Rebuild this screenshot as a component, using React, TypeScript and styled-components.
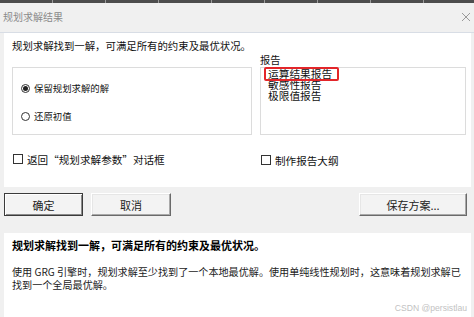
import React from 'react';
import styled, { createGlobalStyle } from 'styled-components';

const GlobalStyle = createGlobalStyle`
  html, body {
    margin: 0;
    padding: 0;
    background: #f0f0f0;
  }
  * {
    box-sizing: border-box;
  }
`;

const CJK = `"Noto Sans CJK SC", "Noto Sans", sans-serif`;

const Window = styled.div`
  width: 474px;
  height: 317px;
  overflow: hidden;
  background: #f0f0f0;
  font-family: ${CJK};
  color: #111;
  display: flex;
  flex-direction: column;
`;

// the taskbar tiles peeking out above the dialog
const TopStrip = styled.div`
  height: 3px;
  flex: none;
  background: repeating-linear-gradient(
    90deg,
    #4d4d4d 0px,
    #4d4d4d 52px,
    #9a9a9a 52px,
    #9a9a9a 53px
  );
`;

const TitleBar = styled.div`
  height: 30px;
  flex: none;
  display: flex;
  align-items: center;
  justify-content: space-between;
  padding: 0 3px 2px 3px;
  border-bottom: 1px solid #d8dde5;
`;

const Title = styled.span`
  font-size: 10px;
  color: #8a8a8a;
  line-height: 12px;
`;

const CloseIcon = styled.svg`
  width: 10px;
  height: 10px;
`;

const Body = styled.div`
  flex: 1;
  display: flex;
  flex-direction: column;
  padding: 0 3px 0 4px;
`;

const UpperPanel = styled.div`
  background: #fff;
  height: 154px;
  flex: none;
  padding: 6px 5px 0 8px;
`;

const Message = styled.div`
  font-size: 10.4px;
  line-height: 13px;
  margin-bottom: 1px;
  white-space: nowrap;
`;

const Columns = styled.div`
  display: grid;
  grid-template-columns: 240px 206px;
  column-gap: 8px;
  grid-template-rows: 14px 68px 14px;
`;

const GroupLabel = styled.div`
  font-size: 10.2px;
  line-height: 14px;
  grid-column: 2;
`;

const GroupBox = styled.div`
  border: 1px solid #dcdcdc;
  position: relative;
`;

const RadioList = styled(GroupBox)`
  grid-column: 1;
  display: flex;
  flex-direction: column;
  gap: 16px;
  padding: 14px 0 0 8px;
`;

const RadioRow = styled.div`
  display: flex;
  align-items: center;
  height: 12px;
  font-size: 9.4px;
  gap: 4px;
  white-space: nowrap;
`;

const RadioCircle = styled.span<{ $checked?: boolean }>`
  width: 9px;
  height: 9px;
  border-radius: 50%;
  border: 1px solid #333;
  display: inline-flex;
  align-items: center;
  justify-content: center;
  &::after {
    content: '';
    width: 5px;
    height: 5px;
    border-radius: 50%;
    background: ${p => (p.$checked ? '#222' : 'transparent')};
  }
`;

const ReportList = styled(GroupBox)`
  grid-column: 2;
  padding: 0 0 0 7px;
`;

const ReportItem = styled.div`
  font-size: 10.7px;
  line-height: 11px;
  white-space: nowrap;
`;

// the red annotation drawn over the screenshot
const Highlight = styled.div`
  position: absolute;
  left: 3px;
  top: -1px;
  width: 75px;
  height: 14px;
  border: 2px solid #e3262a;
  border-radius: 2px;
`;

const CheckRow = styled.div<{ $nudge?: number }>`
  display: flex;
  align-items: center;
  gap: 4px;
  font-size: 10.6px;
  height: 14px;
  margin-top: ${p => 17 + (p.$nudge ?? 0)}px;
  white-space: nowrap;
`;

const CheckBox = styled.span`
  width: 10px;
  height: 10px;
  border: 1px solid #333;
  background: #fff;
  margin-left: 1px;
`;

const ButtonRow = styled.div`
  height: 46px;
  flex: none;
  display: flex;
  align-items: flex-start;
  gap: 8px;
  padding: 6px 4px 0 0;
`;

const Button = styled.button<{ $primary?: boolean; $width: number }>`
  width: ${p => p.$width}px;
  height: 23px;
  font-family: ${CJK};
  font-size: 11px;
  color: #222;
  background: #f3f3f3;
  padding: 0;
  border-style: solid;
  border-width: 1px;
  border-color: ${p =>
    p.$primary ? '#3a3a3a' : '#ffffff #6a6a6a #6a6a6a #ffffff'};
  box-shadow: ${p =>
    p.$primary
      ? 'inset 1px 1px 0 #fff, inset -1px -1px 0 #8a8a8a'
      : 'inset -1px -1px 0 #a9a9a9, inset 1px 1px 0 #e6e6e6'};
`;

const Spacer = styled.div`
  flex: 1;
`;

const LowerPanel = styled.div`
  flex: 1;
  background: #fff;
  position: relative;
  padding: 5px 0 0 8px;
`;

const Summary = styled.div`
  font-size: 11px;
  font-weight: 700;
  line-height: 14px;
  color: #000;
  white-space: nowrap;
`;

const Detail = styled.div`
  margin-top: 14px;
  font-size: 10.1px;
  line-height: 12.5px;
  color: #222;
  white-space: nowrap;
`;

const Watermark = styled.div`
  position: absolute;
  right: 4px;
  bottom: 4px;
  font-family: "Liberation Sans", Arial, sans-serif;
  font-size: 8.6px;
  color: #c2c2c2;
`;

export default function App() {
  return (
    <Window>
      <GlobalStyle />
      <TopStrip />
      <TitleBar>
        <Title>规划求解结果</Title>
        <CloseIcon viewBox="0 0 10 10">
          <path d="M1 1 L9 9 M9 1 L1 9" stroke="#9a9a9a" strokeWidth="1" fill="none" />
        </CloseIcon>
      </TitleBar>
      <Body>
        <UpperPanel>
          <Message>规划求解找到一解，可满足所有的约束及最优状况。</Message>
          <Columns>
            <GroupLabel>报告</GroupLabel>
            <RadioList>
              <RadioRow>
                <RadioCircle $checked />
                保留规划求解的解
              </RadioRow>
              <RadioRow>
                <RadioCircle />
                还原初值
              </RadioRow>
            </RadioList>
            <ReportList>
              <ReportItem>运算结果报告</ReportItem>
              <ReportItem>敏感性报告</ReportItem>
              <ReportItem>极限值报告</ReportItem>
              <Highlight />
            </ReportList>
            <CheckRow>
              <CheckBox />
              返回“规划求解参数”对话框
            </CheckRow>
            <CheckRow $nudge={1}>
              <CheckBox />
              制作报告大纲
            </CheckRow>
          </Columns>
        </UpperPanel>
        <ButtonRow>
          <Button $primary $width={79}>确定</Button>
          <Button $width={80}>取消</Button>
          <Spacer />
          <Button $width={108}>保存方案...</Button>
        </ButtonRow>
        <LowerPanel>
          <Summary>规划求解找到一解，可满足所有的约束及最优状况。</Summary>
          <Detail>
            使用 GRG 引擎时，规划求解至少找到了一个本地最优解。使用单纯线性规划时，这意味着规划求解已
            <br />
            找到一个全局最优解。
          </Detail>
          <Watermark>CSDN @persistlau</Watermark>
        </LowerPanel>
      </Body>
    </Window>
  );
}
